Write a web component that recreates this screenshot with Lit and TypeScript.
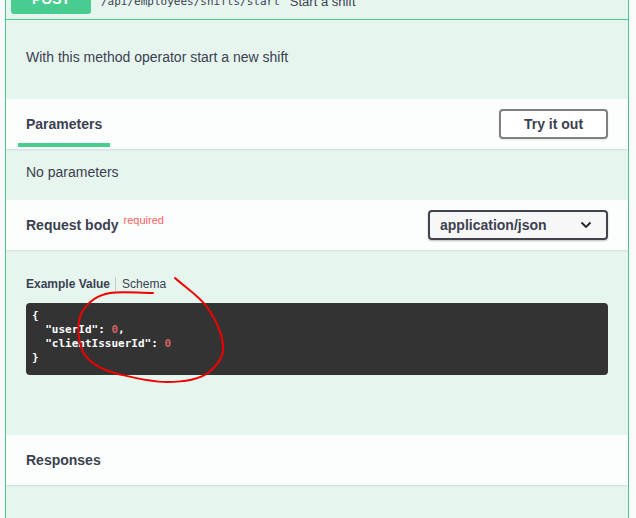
import { LitElement, html, css } from "lit";
import { customElement } from "lit/decorators.js";

@customElement("app-root")
export class AppRoot extends LitElement {
  static styles = css`
    :host {
      display: block;
      width: 636px;
      height: 518px;
      position: relative;
      overflow: hidden;
      background: #fafafa;
      font-family: "Liberation Sans", Arial, sans-serif;
      color: #3b4151;
    }
    .block {
      box-sizing: border-box;
      margin-left: 5px;
      width: 624px;
      height: 530px;
      border: 1px solid #49cc90;
      border-top: 0;
      background: #e7f5ef;
      display: flex;
      flex-direction: column;
    }
    .summary {
      box-sizing: border-box;
      height: 20px;
      border-bottom: 1px solid #49cc90;
      display: flex;
      align-items: flex-end;
      padding: 0 0 5px 5px;
      flex: none;
    }
    .method {
      box-sizing: border-box;
      width: 80px;
      height: 30px;
      border-radius: 3px;
      background: #49cc90;
      color: #fff;
      font-size: 14px;
      font-weight: 700;
      text-align: center;
      line-height: 30px;
      flex: none;
    }
    .path {
      font-family: "DejaVu Sans Mono", monospace;
      font-size: 11px;
      margin-left: 10px;
      line-height: 14px;
      margin-bottom: 5px;
      white-space: nowrap;
      font-weight: 500;
    }
    .sumtext {
      font-size: 13px;
      margin-left: 10px;
      line-height: 14px;
      margin-bottom: 5px;
      white-space: nowrap;
    }
    .desc {
      box-sizing: border-box;
      height: 79px;
      padding: 0 20px 6px;
      display: flex;
      align-items: center;
      font-size: 14px;
      flex: none;
    }
    .bar {
      box-sizing: border-box;
      height: 50px;
      flex: none;
      background: #fcfefd;
      box-shadow: 0 1px 2px rgba(0, 0, 0, 0.1);
      display: flex;
      align-items: center;
      justify-content: space-between;
      padding: 0 20px;
      font-size: 14px;
      font-weight: 700;
    }
    .tab {
      position: relative;
      align-self: stretch;
      display: flex;
      align-items: center;
      margin-left: -8px;
      padding: 0 8px;
      width: 76px;
    }
    .tab::after {
      content: "";
      position: absolute;
      left: 0;
      right: 0;
      bottom: 2px;
      height: 4px;
      background: #49cc90;
    }
    .try {
      box-sizing: border-box;
      width: 109px;
      height: 30px;
      border: 2px solid #808080;
      border-radius: 4px;
      background: #fff;
      font: 700 14px "Liberation Sans", Arial, sans-serif;
      color: #3b4151;
      box-shadow: 0 1px 2px rgba(0, 0, 0, 0.1);
      padding: 0;
    }
    .noparams {
      box-sizing: border-box;
      height: 51px;
      flex: none;
      padding: 0 20px 6px;
      display: flex;
      align-items: center;
      font-size: 14px;
    }
    .title {
      display: flex;
      align-items: flex-start;
    }
    .req {
      font-size: 11px;
      font-weight: 400;
      color: #ff6060;
      margin: -3px 0 0 5px;
      line-height: 12px;
    }
    .select {
      box-sizing: border-box;
      width: 180px;
      height: 30px;
      border: 2px solid #41444e;
      border-radius: 4px;
      background: #f7f7f7;
      box-shadow: 0 1px 2px rgba(0, 0, 0, 0.25);
      display: flex;
      align-items: center;
      justify-content: space-between;
      padding: 0 14px 0 10px;
    }
    .select svg {
      display: block;
    }
    .body {
      flex: none;
      height: 185px;
      box-sizing: border-box;
      padding: 27px 20px 0;
    }
    .tabs {
      display: flex;
      align-items: center;
      font-size: 12px;
      height: 14px;
    }
    .tabs b {
      padding-right: 5px;
      border-right: 1px solid #c5ccc9;
    }
    .tabs span {
      padding-left: 6px;
    }
    .code {
      box-sizing: border-box;
      margin: 12px 0 0;
      width: 582px;
      height: 72px;
      border-radius: 4px;
      background: #333333;
      color: #fff;
      padding: 6px 6px;
      font: 700 11px/14px "DejaVu Sans Mono", monospace;
      white-space: pre;
    }
    .num {
      color: #d36363;
      font-weight: 700;
    }
    .scribble {
      position: absolute;
      inset: 0;
      pointer-events: none;
    }
  `;

  render() {
    return html`
      <div class="block">
        <div class="summary">
          <div class="method">POST</div>
          <div class="path">/api/employees/shifts/start</div>
          <div class="sumtext">Start a shift</div>
        </div>
        <div class="desc">With this method operator start a new shift</div>
        <div class="bar">
          <div class="tab">Parameters</div>
          <button class="try">Try it out</button>
        </div>
        <div class="noparams">No parameters</div>
        <div class="bar">
          <div class="title">Request body<span class="req">required</span></div>
          <div class="select">
            <span>application/json</span>
            <svg width="12" height="8" viewBox="0 0 12 8">
              <path d="M1.5 1.5 L6 6 L10.5 1.5" fill="none" stroke="#222" stroke-width="1.8" />
            </svg>
          </div>
        </div>
        <div class="body">
          <div class="tabs"><b>Example Value</b><span>Schema</span></div>
          <div class="code">{
  "userId": <span class="num">0</span>,
  "clientIssuerId": <span class="num">0</span>
}</div>
        </div>
        <div class="bar">Responses</div>
      </div>
      <svg class="scribble" width="636" height="518" viewBox="0 0 636 518">
        <path
          d="M153 293 C138 293 122 291 110 293 C98 295 88 302 82 312 C77 322 77 338 83 352 C90 364 102 370 118 374 C135 378 150 382 167 382 C183 382 198 380 208 373 C218 365 224 355 223 345 C222 332 216 320 207 307 C198 295 186 288 175 278"
          fill="none"
          stroke="#f00000"
          stroke-width="2"
          stroke-linecap="round"
        />
      </svg>
    `;
  }
}
